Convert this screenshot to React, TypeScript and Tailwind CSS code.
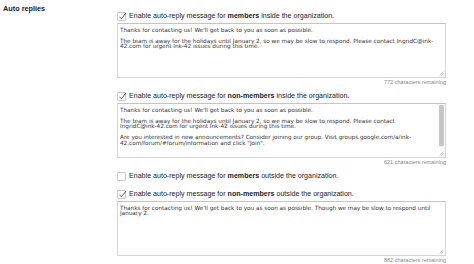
import React from "react";

const Check = ({ checked }: { checked: boolean }) => (
  <span className="relative w-[9px] h-[9px] border border-[#c9c9c9] bg-white rounded-[1px] shrink-0">
    {checked && (
      <svg className="absolute left-[0px] top-[-1px]" width="9" height="9" viewBox="0 0 9 9">
        <path d="M1.5 4.8 L3.4 6.8 L8 1" fill="none" stroke="#444" strokeWidth="0.9" />
      </svg>
    )}
  </span>
);

const Label = ({ checked, who, where, className = "" }: { checked: boolean; who: string; where: string; className?: string }) => (
  <div className={`flex items-center h-[10px] gap-[3px] text-[7.1px] leading-[10px] text-[#222] ${className}`}>
    <Check checked={checked} />
    <span className="whitespace-pre">
      Enable auto-reply message for <b>{who}</b> {where} the organization.
    </span>
  </div>
);

const Grip = () => (
  <svg className="absolute right-[1px] bottom-[1px]" width="5" height="5" viewBox="0 0 5 5">
    <path d="M0.5 4.5 L4.5 0.5 M2.5 4.5 L4.5 2.5" stroke="#aaa" strokeWidth="0.6" />
  </svg>
);

const Box = ({ lines, scroll = false }: { lines: string[]; scroll?: boolean }) => (
  <div
    className="relative mt-[2px] h-[55px] w-[329px] border border-[#d6d6d6] border-t-[#c4c4c4] bg-white pl-[2px] pt-[3.5px] text-[5.7px] leading-[5.5px] text-[#333] overflow-hidden"
    style={{ fontFamily: '"DejaVu Sans", Verdana, sans-serif' }}
  >
    {lines.map((l, i) => (
      <div key={i} className="whitespace-pre h-[5.5px]">
        {l}
      </div>
    ))}
    {scroll && (
      <div className="absolute right-[1px] top-[1px] bottom-[10px] w-[5px] bg-[#f4f4f4]">
        <div className="w-[5px] h-[41px] bg-[#c6c6c6] rounded-[1px]" />
      </div>
    )}
    <Grip />
  </div>
);

const Counter = ({ n }: { n: number }) => (
  <div className="mt-[1px] h-[6px] w-[329px] text-right text-[5.5px] leading-[6px] text-[#888]">
    {n} characters remaining
  </div>
);

export default function App() {
  return (
    <div
      className="w-[474px] h-[264px] bg-white flex overflow-hidden"
      style={{ fontFamily: '"Liberation Sans", Arial, sans-serif' }}
    >
      <div className="w-[117px] pl-[3px] pt-[4px] text-[7.3px] leading-[10px] font-bold text-[#222]">Auto replies</div>
      <div className="flex flex-col pt-[11px]">
        <Label checked who="members" where="inside" />
        <Box
          lines={[
            "Thanks for contacting us! We'll get back to you as soon as possible.",
            "",
            "The team is away for the holidays until January 2, so we may be slow to respond. Please contact IngridC@ink-",
            "42.com for urgent Ink-42 issues during this time.",
          ]}
        />
        <Counter n={772} />
        <Label checked who="non-members" where="inside" className="mt-[6px]" />
        <Box
          scroll
          lines={[
            "Thanks for contacting us! We'll get back to you as soon as possible.",
            "",
            "The team is away for the holidays until January 2, so we may be slow to respond. Please contact",
            "IngridC@ink-42.com for urgent Ink-42 issues during this time.",
            "",
            "Are you interested in new announcements? Consider joining our group. Visit groups.google.com/a/ink-",
            "42.com/forum/#forum/information and click \"Join\".",
          ]}
        />
        <Counter n={621} />
        <Label checked={false} who="members" where="outside" className="mt-[6px]" />
        <Label checked who="non-members" where="outside" className="mt-[8px]" />
        <Box
          lines={[
            "Thanks for contacting us! We'll get back to you as soon as possible. Though we may be slow to respond until",
            "January 2.",
          ]}
        />
        <Counter n={882} />
      </div>
    </div>
  );
}
